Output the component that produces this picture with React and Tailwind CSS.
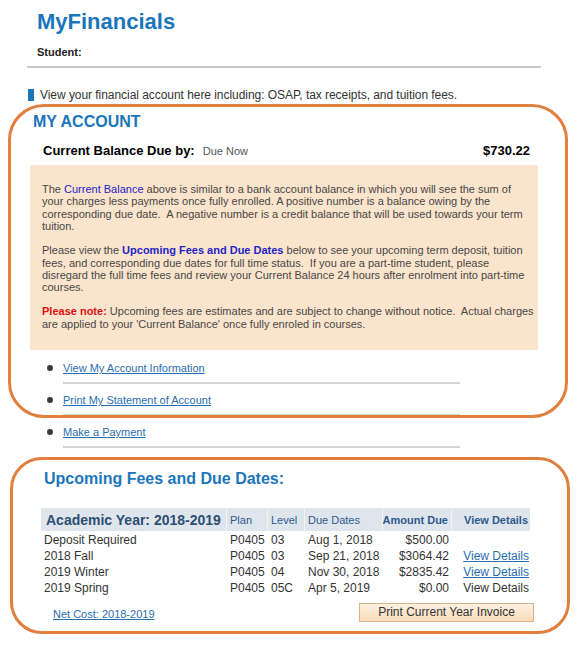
import React from "react";

const S = "\u00a0 ";

function Bullet({ children }) {
  return (
    <li className="flex items-start">
      <div className="w-[63px] flex justify-end pr-[10px] pt-[13px]">
        <span className="block w-[6px] h-[6px] rounded-full bg-[#3a3a3a]" />
      </div>
      <div className="w-[397px] pt-[9px] pb-[7px] border-b-2 border-[#d4d4d4] text-[11px] leading-[14px]">
        <a href="#" className="text-[#2a6eb0] underline">
          {children}
        </a>
      </div>
    </li>
  );
}

const rows = [
  { n: "Deposit Required", p: "P0405", l: "03", d: "Aug 1, 2018", a: "$500.00", v: null },
  { n: "2018 Fall", p: "P0405", l: "03", d: "Sep 21, 2018", a: "$3064.42", v: "link" },
  { n: "2019 Winter", p: "P0405", l: "04", d: "Nov 30, 2018", a: "$2835.42", v: "link" },
  { n: "2019 Spring", p: "P0405", l: "05C", d: "Apr 5, 2019", a: "$0.00", v: "text" },
];

const hdr = "h-full flex items-center whitespace-nowrap text-[11px] leading-[14px] text-[#2c5a8c] border-r border-[#f2f5f8]";

export default function App() {
  return (
    <div
      className="relative w-[579px] h-[645px] bg-white overflow-hidden text-[#333]"
      style={{ fontFamily: '"Liberation Sans", Arial, sans-serif' }}
    >
      {/* header */}
      <div className="pl-[37px] pt-[9px]">
        <h1 className="text-[22px] leading-[26px] font-bold text-[#1b75bb]">MyFinancials</h1>
        <div className="mt-[10px] text-[11px] leading-[14px] font-bold text-[#222]">Student:</div>
      </div>
      <div className="ml-[27px] mt-[7px] w-[514px] h-[2px] bg-[#c6c6c6]" />

      <div className="ml-[28px] mt-[20px] flex items-center h-[14px]">
        <span className="block w-[6px] h-[12px] bg-[#1b75bb]" />
        <span className="ml-[6px] text-[12px] leading-[14px] text-[#333] tracking-[-0.05px]">
          View your financial account here including: OSAP, tax receipts, and tuition fees.
        </span>
      </div>

      {/* My account */}
      <div className="ml-[33px] mt-[10px] text-[16px] leading-[20px] font-bold text-[#1b75bb]">
        MY ACCOUNT
      </div>
      <div className="ml-[43px] w-[487px] mt-[10px] flex items-baseline h-[18px] leading-[18px]">
        <span className="text-[13px] font-bold text-black">Current Balance Due by:</span>
        <span className="ml-[8px] text-[11px] text-[#555]">Due Now</span>
        <span className="ml-auto text-[13px] font-bold text-black">$730.22</span>
      </div>

      <div className="ml-[30px] mt-[5px] w-[508px] bg-[#fbe4cc] pl-[12px] pt-[18px] pb-[20px] text-[11px] leading-[12.4px] text-[#474747]">
        <p>
          The <span className="text-[#2323c8]">Current Balance</span> above is similar to a bank account balance in which you will see the sum of
          <br />
          your charges less payments once fully enrolled. A positive number is a balance owing by the
          <br />
          corresponding due date.{S}A negative number is a credit balance that will be used towards your term
          <br />
          tuition.
        </p>
        <p className="mt-[11.6px]">
          Please view the <span className="text-[#2323c8] font-bold">Upcoming Fees and Due Dates</span> below to see your upcoming term deposit, tuition
          <br />
          fees, and corresponding due dates for full time status.{S}If you are a part-time student, please
          <br />
          disregard the full time fees and review your Current Balance 24 hours after enrolment into part-time
          <br />
          courses.
        </p>
        <p className="mt-[11.6px]">
          <span className="text-[#e01010] font-bold">Please note:</span> Upcoming fees are estimates and are subject to change without notice.{S}Actual charges
          <br />
          are applied to your 'Current Balance' once fully enroled in courses.
        </p>
      </div>

      <ul className="mt-[2px]">
        <Bullet>View My Account Information</Bullet>
        <Bullet>Print My Statement of Account</Bullet>
        <Bullet>Make a Payment</Bullet>
      </ul>

      {/* Upcoming fees */}
      <div className="ml-[44px] mt-[21px] text-[16px] leading-[20px] font-bold text-[#1b75bb]">
        Upcoming Fees and Due Dates:
      </div>

      <div className="ml-[41px] mt-[19px] w-[489px]">
        <div className="grid grid-cols-[186px_41px_37px_78px_69px_78px] h-[23px] bg-[#dfe5ec] items-center">
          <div className="pl-[5px] h-full flex items-center whitespace-nowrap text-[14px] leading-[18px] font-bold text-[#2c4f73] border-r border-[#f2f5f8]">
            Academic Year: 2018-2019
          </div>
          <div className={`pl-[3px] ${hdr}`}>Plan</div>
          <div className={`pl-[3px] ${hdr}`}>Level</div>
          <div className={`pl-[3px] ${hdr}`}>Due Dates</div>
          <div className={`pr-[3px] justify-end font-bold ${hdr}`}>Amount Due</div>
          <div className="pr-[2px] h-full flex items-center justify-end whitespace-nowrap text-[11px] leading-[14px] font-bold text-[#2c5a8c]">
            View Details
          </div>
        </div>
        <div className="pt-[1px]">
          {rows.map((r) => (
            <div
              key={r.n}
              className="grid grid-cols-[186px_41px_37px_78px_69px_78px] h-[16px] items-center whitespace-nowrap text-[12px] leading-[16px] text-[#333]"
            >
              <div className="pl-[3px]">{r.n}</div>
              <div className="pl-[3px]">{r.p}</div>
              <div className="pl-[3px]">{r.l}</div>
              <div className="pl-[3px]">{r.d}</div>
              <div className="pr-[3px] text-right">{r.a}</div>
              <div className="pr-[1px] text-right">
                {r.v === "link" && (
                  <a href="#" className="text-[#2a6eb0] underline">View Details</a>
                )}
                {r.v === "text" && <span>View Details</span>}
              </div>
            </div>
          ))}
        </div>
        <div className="flex items-start mt-[7px] leading-[14px]">
          <a href="#" className="ml-[12px] mt-[4px] text-[11px] leading-[14px] text-[#2a6eb0] underline whitespace-nowrap">
            Net Cost: 2018-2019
          </a>
          <button
            type="button"
            className="ml-auto mr-[-4px] w-[175px] h-[19px] border border-[#d9b38a] bg-gradient-to-b from-[#fdf1e1] to-[#f8dbba] text-[12px] leading-[17px] text-[#333] whitespace-nowrap"
          >
            Print Current Year Invoice
          </button>
        </div>
      </div>

      {/* annotation outlines */}
      <div className="pointer-events-none absolute left-[8px] top-[104px] w-[560px] h-[314px] border-[3px] border-[#e07f3e] rounded-[36px]" />
      <div className="pointer-events-none absolute left-[10px] top-[457px] w-[560px] h-[177px] border-[3px] border-[#e07f3e] rounded-[32px]" />
    </div>
  );
}
